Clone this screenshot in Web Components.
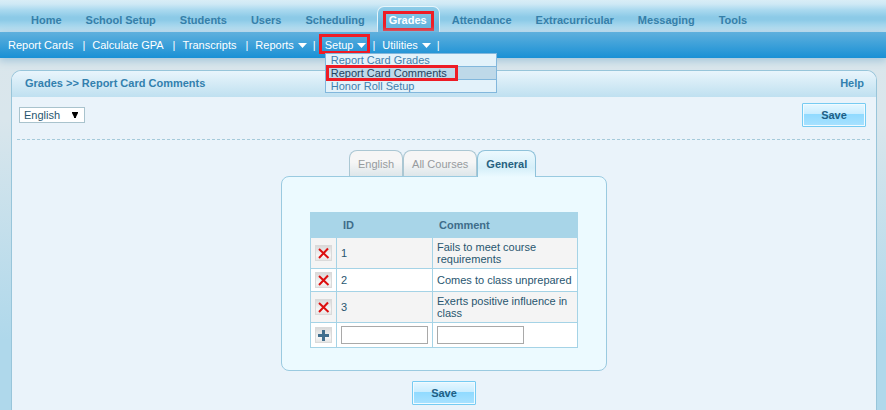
<!DOCTYPE html>
<html lang="en">
<head>
<meta charset="utf-8">
<title>Report Card Comments</title>
<style>
    body { margin: 0; min-height: 100vh; display: flex; flex-direction: column; font: 11px "Liberation Sans", Arial, sans-serif; color: #28566f; background: linear-gradient(#dbe6eb, #d9e6ec 120px, #afd8eb 340px, #afd8eb); }
    page-panel { flex: 1; }
</style>
</head>
<body>
    <main-menu>
        <menu-tab>Home</menu-tab>
        <menu-tab>School Setup</menu-tab>
        <menu-tab>Students</menu-tab>
        <menu-tab>Users</menu-tab>
        <menu-tab>Scheduling</menu-tab>
        <menu-tab active>Grades</menu-tab>
        <menu-tab>Attendance</menu-tab>
        <menu-tab>Extracurricular</menu-tab>
        <menu-tab>Messaging</menu-tab>
        <menu-tab>Tools</menu-tab>
    </main-menu>
    <sub-menu>
        <sub-item>Report Cards</sub-item>
        <sub-item>Calculate GPA</sub-item>
        <sub-item>Transcripts</sub-item>
        <sub-item arrow>Reports</sub-item>
        <sub-item arrow marked>Setup<drop-menu slot="menu" items="Report Card Grades|Report Card Comments|Honor Roll Setup" selected="1"></drop-menu></sub-item>
        <sub-item arrow>Utilities</sub-item>
    </sub-menu>
    <page-panel heading="Grades &gt;&gt; Report Card Comments">
        <tool-bar>
            <language-select></language-select>
            <save-button></save-button>
        </tool-bar>
        <tab-box tabs="English|All Courses|General" selected="2">
            <comments-table></comments-table>
        </tab-box>
        <save-button></save-button>
    </page-panel>

<script>
// --- Base for every element: markup goes into an open shadow root ---
class BaseElement extends HTMLElement {
    constructor() {
        super();
        this.attachShadow({ mode: 'open' });
    }

    connectedCallback() {
        this.render();
    }

    list(name) {
        return this.getAttribute(name).split('|');
    }
}

// --- Top navigation ---
class MainMenu extends BaseElement {
    render() {
        this.shadowRoot.innerHTML = `
            <style>
                :host { display: block; background: linear-gradient(#d9edf6, #cfe9f5 4px, #aad9ef 10px, #8ccae7 17px, #8ccae7 20px, #a4d6ed 25px, #c3e3f2 32px); }
                nav { display: flex; height: 32px; padding-left: 19px; }
            </style>
            <nav aria-label="Modules"><slot></slot></nav>
        `;
    }
}

class MenuTab extends BaseElement {
    render() {
        this.shadowRoot.innerHTML = `
            <style>
                :host { display: flex; padding-top: 6px; }
                a { box-sizing: border-box; height: 26px; padding: 8px 12px 0; color: #357fa9; font-weight: bold; line-height: 13px; text-decoration: none; white-space: nowrap; }
                :host([active]) a { padding: 4px 5px 0; color: #fff; background: linear-gradient(#8dcbe7, #5aaedb); border: 1px solid #e6f5fb; border-bottom: 0; border-radius: 7px 7px 0 0; }
                :host([active]) span { display: block; padding: 0 4px 1px 3px; border: 3px solid #ee1c25; }
            </style>
            <a href="#"><span><slot></slot></span></a>
        `;
    }
}

// --- Second level navigation ---
class SubMenu extends BaseElement {
    render() {
        this.shadowRoot.innerHTML = `
            <style>
                :host { display: block; position: relative; z-index: 1; color: #fff; background: linear-gradient(#5fb0dd, #1990d5); box-shadow: 0 2px 8px 1px #a5c6da; }
                nav { display: flex; height: 26px; padding-left: 8px; }
            </style>
            <nav aria-label="Grades"><slot></slot></nav>
        `;
    }
}

class SubItem extends BaseElement {
    render() {
        const arrow = this.hasAttribute('arrow')
            ? '<svg width="9" height="5" viewBox="0 0 9 5" aria-hidden="true"><path d="M0 0h9L4.5 5z" fill="#fff"/></svg>'
            : '';
        this.shadowRoot.innerHTML = `
            <style>
                :host { position: relative; display: flex; height: 26px; line-height: 26px; white-space: nowrap; }
                a { position: relative; display: flex; align-items: center; gap: 4px; color: inherit; text-decoration: none; }
                i { margin: 0 7px 0 9px; font-style: normal; }
                :host([arrow]) i { margin: 0 7px 0 6px; }
                :host([marked]) { margin-left: 2px; }
                :host([marked]) a::after { content: ""; position: absolute; inset: 2px -4px 4px -6px; border: 3px solid #ee1c25; }
            </style>
            <a href="#"><slot></slot>${arrow}</a><i>|</i>
            <slot name="menu"></slot>
        `;
    }
}

class DropMenu extends BaseElement {
    render() {
        const selected = Number(this.getAttribute('selected'));
        const links = this.list('items').map((text, i) =>
            `<a href="#" ${i === selected ? 'class="selected"' : ''}><span>${text}</span></a>`).join('');
        this.shadowRoot.innerHTML = `
            <style>
                :host { position: absolute; top: 21px; left: 0; width: 170px; border: 1px solid #82b7dc; border-top: 0; background: #e3f2fa; }
                a { display: block; height: 12px; padding-left: 5px; color: #417fae; line-height: 12px; text-decoration: none; border-top: 1px solid #82b7dc; }
                a:first-child { border-top: 0; }
                .selected { color: #23425f; background: #bed9e9; }
                .selected span { position: relative; }
                .selected span::after { content: ""; position: absolute; inset: -2px -11px -2px -5px; border: 3px solid #ee1c25; }
            </style>
            ${links}
        `;
    }
}

// --- Content area ---
class PagePanel extends BaseElement {
    render() {
        this.shadowRoot.innerHTML = `
            <style>
                :host { display: flex; flex-direction: column; align-items: center; margin: 12px 9px 0 11px; border: 1px solid #98c5da; border-bottom: 0; border-radius: 10px 10px 0 0; background: #eaf3fa; overflow: hidden; }
                header { box-sizing: border-box; display: flex; justify-content: space-between; align-self: stretch; height: 26px; padding: 0 12px 0 13px; line-height: 24px; background: linear-gradient(#e9f5fc, #bfe0f0); }
                h1, a { margin: 0; color: #3280ae; font-size: 11px; font-weight: bold; text-decoration: none; }
            </style>
            <header><h1>${this.getAttribute('heading')}</h1><a href="#">Help</a></header>
            <slot></slot>
        `;
    }
}

class ToolBar extends BaseElement {
    render() {
        this.shadowRoot.innerHTML = `
            <style>
                :host { box-sizing: border-box; display: flex; justify-content: space-between; align-items: center; align-self: stretch; height: 43px; margin: 0 6px 10px 5px; padding: 0 4px 7px 2px; border-bottom: 1px dashed #a5cada; }
            </style>
            <slot></slot>
        `;
    }
}

class LanguageSelect extends BaseElement {
    render() {
        this.shadowRoot.innerHTML = `
            <style>
                :host { display: block; }
                label { display: flex; align-items: center; }
                select { appearance: none; box-sizing: border-box; width: 66px; height: 16px; padding: 0 4px; font: inherit; color: #28566f; background: #fff; border: 1px solid #a9c3cd; border-radius: 0; }
                svg { margin-left: -13px; pointer-events: none; }
            </style>
            <label>
                <select aria-label="Language"><option>English</option></select>
                <svg width="6" height="6" viewBox="0 0 6 6" aria-hidden="true"><path d="M0 0h6v1L4 5v1H2V5L0 1z"/></svg>
            </label>
        `;
    }
}

class SaveButton extends BaseElement {
    render() {
        this.shadowRoot.innerHTML = `
            <style>
                :host { display: block; }
                button { display: block; width: 64px; height: 24px; padding: 0; font: bold 11px "Liberation Sans", Arial, sans-serif; color: #215f85; background: linear-gradient(#e6f7ff, #c9edff 45%, #90daff 46%, #a9e2ff); border: 1px solid #76cbf2; border-radius: 1px; box-shadow: inset 0 0 0 1px #f0faff; cursor: pointer; }
            </style>
            <button type="button">Save</button>
        `;
    }
}

class TabBox extends BaseElement {
    render() {
        const selected = Number(this.getAttribute('selected'));
        const tabs = this.list('tabs').map((text, i) =>
            `<button type="button" role="tab" aria-selected="${i === selected}">${text}</button>`).join('');
        this.shadowRoot.innerHTML = `
            <style>
                :host { display: block; margin-bottom: 10px; }
                .tabs { display: flex; padding-left: 68px; }
                button { height: 26px; padding: 0 8px; font: 11px "Liberation Sans", Arial, sans-serif; color: #979b9e; background: linear-gradient(#f6f6f6 45%, #dde6ea); border: 1px solid #abc7d3; border-bottom: 0; border-radius: 8px 8px 0 0; cursor: pointer; }
                button[aria-selected="true"] { position: relative; height: 27px; margin-bottom: -1px; padding-bottom: 1px; font-weight: bold; color: #26617f; background: linear-gradient(#ecf9fe, #d5eff9 65%, #ecfaff); border-color: #8fc2da; }
                .box { padding: 35px 28px 22px; border: 1px solid #9acae0; border-radius: 8px; background: #ecfaff; }
            </style>
            <div class="tabs" role="tablist">${tabs}</div>
            <div class="box"><slot></slot></div>
        `;
    }
}

// --- Table of comments ---
class CommentsTable extends BaseElement {
    constructor() {
        super();
        this.comments = [
            'Fails to meet course requirements',
            'Comes to class unprepared',
            'Exerts positive influence in class'
        ];
    }

    render() {
        const rows = this.comments.map((text, i) => `
            <tr>
                <td><icon-button type="remove"></icon-button></td>
                <td>${i + 1}</td>
                <td>${text}</td>
            </tr>`).join('');
        this.shadowRoot.innerHTML = `
            <style>
                :host { display: block; }
                table { width: 268px; table-layout: fixed; border-collapse: collapse; background: #fff; }
                .icon { width: 26px; }
                .id { width: 96px; }
                th { height: 24px; padding: 0 6px; text-align: left; color: #3f6d8a; background: #a8d5e8; border: 1px solid #a8d5e8; }
                td { height: 22px; padding: 0 4px; line-height: 12px; border: 1px solid #a5d3e6; }
                tbody tr:nth-child(odd) { background: #f4f4f4; }
                tbody tr:nth-child(odd) td { height: 30px; }
                tfoot td { height: 24px; }
                input { display: block; box-sizing: border-box; width: 87px; height: 18px; padding: 1px 2px; font: inherit; background: #fff; border: 1px solid #a9a9a9; }
            </style>
            <table>
                <colgroup><col class="icon"><col class="id"><col></colgroup>
                <thead><tr><th></th><th>ID</th><th>Comment</th></tr></thead>
                <tbody>${rows}</tbody>
                <tfoot>
                    <tr>
                        <td><icon-button type="add"></icon-button></td>
                        <td><input aria-label="New ID"></td>
                        <td><input aria-label="New comment"></td>
                    </tr>
                </tfoot>
            </table>
        `;
    }
}

class IconButton extends BaseElement {
    render() {
        const remove = this.getAttribute('type') === 'remove';
        const shape = remove
            ? '<path d="M4 4l9.500 9M13 3.500L4 13" stroke="#dc0f0f" stroke-width="2"/>'
            : '<path d="M8.500 3v11M3 8.500h11" stroke="#426f8e" stroke-width="3"/>';
        this.shadowRoot.innerHTML = `
            <style>
                :host { display: block; }
                button { display: block; width: 17px; height: 16px; padding: 0; background: linear-gradient(#d6d6d6, #f6f6f6 65%, #e2e2e2); border: 0; box-shadow: inset 0 0 0 1px #dadada; cursor: pointer; }
                svg { display: block; }
            </style>
            <button type="button" aria-label="${remove ? 'Delete' : 'Add'}">
                <svg width="17" height="16" viewBox="0 0 17 16" fill="none">${shape}</svg>
            </button>
        `;
    }
}

customElements.define('main-menu', MainMenu);
customElements.define('menu-tab', MenuTab);
customElements.define('sub-menu', SubMenu);
customElements.define('sub-item', SubItem);
customElements.define('drop-menu', DropMenu);
customElements.define('page-panel', PagePanel);
customElements.define('tool-bar', ToolBar);
customElements.define('language-select', LanguageSelect);
customElements.define('save-button', SaveButton);
customElements.define('tab-box', TabBox);
customElements.define('comments-table', CommentsTable);
customElements.define('icon-button', IconButton);
</script>
</body>
</html>
